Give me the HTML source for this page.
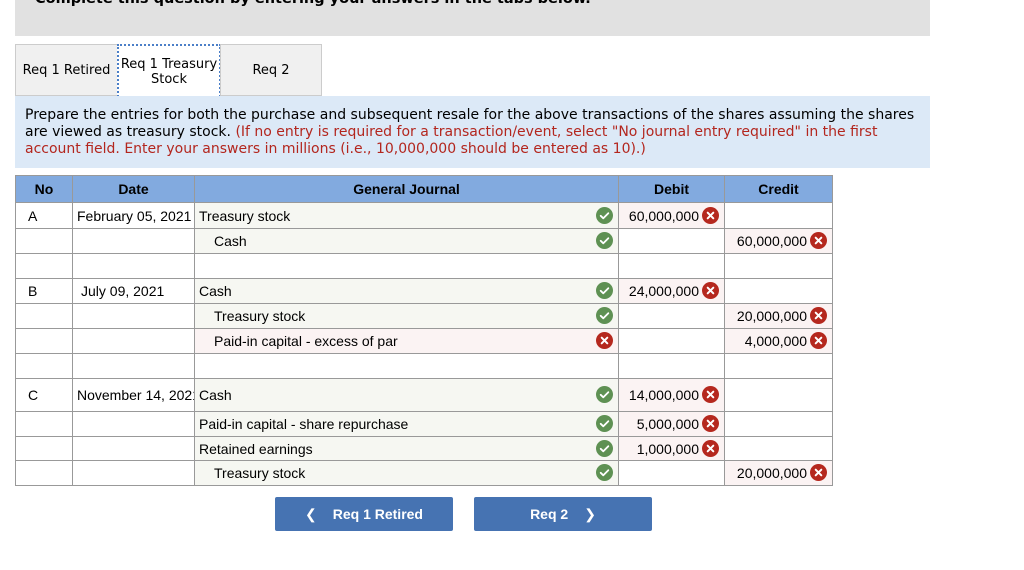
<!DOCTYPE html>
<html><head><meta charset="utf-8"><style>
*{box-sizing:border-box;margin:0;padding:0}
body{width:1024px;height:570px;background:#fff;font-family:"Liberation Sans",Arial,sans-serif;position:relative;overflow:hidden;color:#000}
.banner{position:absolute;left:15px;top:0;width:915px;height:36px;background:#e1e1e1}
.banner b{position:absolute;left:20px;top:-9px;font-family:"DejaVu Sans",sans-serif;font-size:14.5px}
.tab{position:absolute;top:44px;height:52px;background:#f0f0f0;border:1px solid #ccc;font-family:"DejaVu Sans",sans-serif;font-size:13px;display:flex;align-items:center;justify-content:center;text-align:center;line-height:15px}
.inst{position:absolute;left:15px;top:96px;width:915px;height:72px;background:#dce9f7;font-family:"DejaVu Sans",sans-serif;font-size:14px;line-height:17px;padding:11px 8px 0 10px}
.inst span{color:#b3261e}
table{position:absolute;left:15px;top:175px;border-collapse:collapse;font-size:14px;table-layout:fixed;width:817px}
td{border:1px solid #999;padding:0 4px;white-space:nowrap;overflow:hidden;position:relative}
th{background:#82aadf;border:1px solid #999;font-weight:bold;font-size:14px}
.g{background:#f6f7f2}.r{background:#fbf3f3}.p{background:#fbf3f3}
.num{text-align:right;padding-right:25px}
.ic{position:absolute;right:5px;top:50%;margin-top:-9px;width:17px;height:17px;border-radius:50%}
.ok{background:#5e9153}.bad{background:#b5281e}
.ic svg{position:absolute;left:0;top:0}
.in{padding-left:19px}
.btn{position:absolute;top:497px;height:34px;background:#4673b2;color:#fff;font-weight:bold;font-size:14px;display:flex;align-items:center;justify-content:center;border-radius:2px}
</style></head><body>
<div class="banner"><b>Complete this question by entering your answers in the tabs below.</b></div>
<div class="tab" style="left:15px;width:103px">Req 1 Retired</div>
<div class="tab" style="left:117px;width:104px;background:#fff;border:2px dotted #4b7fc8;border-bottom:none;height:53px">Req 1 Treasury<br>Stock</div>
<div class="tab" style="left:220px;width:102px">Req 2</div>
<div class="inst">Prepare the entries for both the purchase and subsequent resale for the above transactions of the shares assuming the shares are viewed as treasury stock. <span>(If no entry is required for a transaction/event, select "No journal entry required" in the first account field. Enter your answers in millions (i.e., 10,000,000 should be entered as 10).)</span></div>
<svg width="0" height="0" style="position:absolute"><defs>
<symbol id="ck" viewBox="0 0 17 17"><path d="M4.7 8.8l2.6 2.5L12.3 6.2" fill="none" stroke="#fff" stroke-width="1.8" stroke-linecap="round" stroke-linejoin="round"/></symbol>
<symbol id="xx" viewBox="0 0 17 17"><path d="M5.7 5.7l5.6 5.6M11.3 5.7l-5.6 5.6" fill="none" stroke="#fff" stroke-width="2" stroke-linecap="round"/></symbol>
</defs></svg>
<table>
<colgroup><col style="width:57px"><col style="width:122px"><col style="width:424px"><col style="width:106px"><col style="width:108px"></colgroup>
<tr style="height:27px"><th>No</th><th>Date</th><th>General Journal</th><th>Debit</th><th>Credit</th></tr>
<tr style="height:26px"><td style="padding-left:12px">A</td><td>February 05, 2021</td><td class="g">Treasury stock<span class="ic ok"><svg width="17" height="17"><use href="#ck"/></svg></span></td><td class="p num">60,000,000<span class="ic bad"><svg width="17" height="17"><use href="#xx"/></svg></span></td><td></td></tr>
<tr style="height:25px"><td></td><td></td><td class="g in">Cash<span class="ic ok"><svg width="17" height="17"><use href="#ck"/></svg></span></td><td></td><td class="p num">60,000,000<span class="ic bad"><svg width="17" height="17"><use href="#xx"/></svg></span></td></tr>
<tr style="height:25px"><td></td><td></td><td></td><td></td><td></td></tr>
<tr style="height:25px"><td style="padding-left:12px">B</td><td style="padding-left:8px">July 09, 2021</td><td class="g">Cash<span class="ic ok"><svg width="17" height="17"><use href="#ck"/></svg></span></td><td class="p num">24,000,000<span class="ic bad"><svg width="17" height="17"><use href="#xx"/></svg></span></td><td></td></tr>
<tr style="height:25px"><td></td><td></td><td class="g in">Treasury stock<span class="ic ok"><svg width="17" height="17"><use href="#ck"/></svg></span></td><td></td><td class="p num">20,000,000<span class="ic bad"><svg width="17" height="17"><use href="#xx"/></svg></span></td></tr>
<tr style="height:25px"><td></td><td></td><td class="r in">Paid-in capital - excess of par<span class="ic bad"><svg width="17" height="17"><use href="#xx"/></svg></span></td><td></td><td class="p num">4,000,000<span class="ic bad"><svg width="17" height="17"><use href="#xx"/></svg></span></td></tr>
<tr style="height:25px"><td></td><td></td><td></td><td></td><td></td></tr>
<tr style="height:33px"><td style="padding-left:12px">C</td><td>November 14, 2021</td><td class="g">Cash<span class="ic ok"><svg width="17" height="17"><use href="#ck"/></svg></span></td><td class="p num">14,000,000<span class="ic bad"><svg width="17" height="17"><use href="#xx"/></svg></span></td><td></td></tr>
<tr style="height:25px"><td></td><td></td><td class="g">Paid-in capital - share repurchase<span class="ic ok"><svg width="17" height="17"><use href="#ck"/></svg></span></td><td class="p num">5,000,000<span class="ic bad"><svg width="17" height="17"><use href="#xx"/></svg></span></td><td></td></tr>
<tr style="height:24px"><td></td><td></td><td class="g">Retained earnings<span class="ic ok"><svg width="17" height="17"><use href="#ck"/></svg></span></td><td class="p num">1,000,000<span class="ic bad"><svg width="17" height="17"><use href="#xx"/></svg></span></td><td></td></tr>
<tr style="height:25px"><td></td><td></td><td class="g in">Treasury stock<span class="ic ok"><svg width="17" height="17"><use href="#ck"/></svg></span></td><td></td><td class="p num">20,000,000<span class="ic bad"><svg width="17" height="17"><use href="#xx"/></svg></span></td></tr>
</table>
<div class="btn" style="left:275px;width:178px"><span style="margin-right:16px;font-weight:normal">&#10094;</span>Req 1 Retired</div>
<div class="btn" style="left:474px;width:178px">Req 2<span style="margin-left:16px;font-weight:normal">&#10095;</span></div>
</body></html>
